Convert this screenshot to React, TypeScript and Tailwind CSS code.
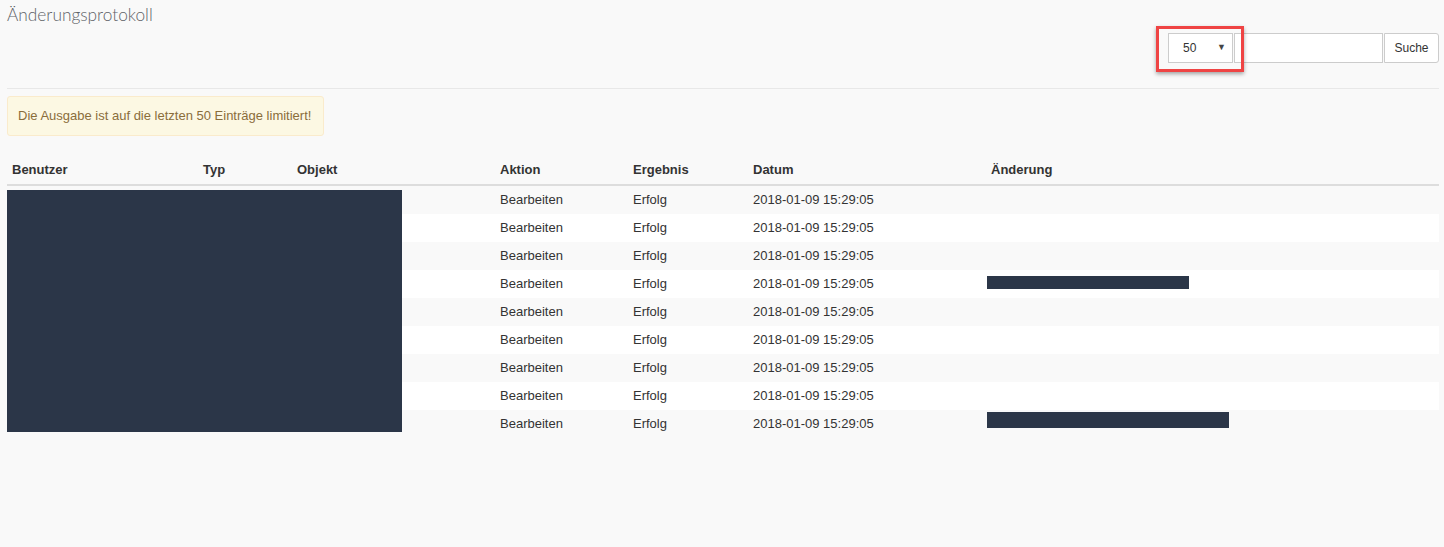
import React from "react";

const rows = Array.from({ length: 9 });

export default function App() {
  return (
    <div className="min-h-[547px] w-full bg-[#f9f9f9] pl-[7px] pr-[5px] text-[#333] font-['Liberation_Sans',Arial,sans-serif]">
      <h1 className="pt-[3px] text-[17.3px] leading-[24px] font-light text-[#5f6368] font-['Lato',sans-serif]">
        Änderungsprotokoll
      </h1>

      <div className="mt-[6px] flex justify-end">
        <div className="relative flex h-[30px] items-stretch">
          <div className="flex w-[65px] items-center justify-between border border-[#ccc] bg-white pl-[14px] pr-[6px] text-[12px]">
            <span>50</span>
            <span className="text-[9px] text-[#444]">▼</span>
          </div>
          <input
            className="ml-[1px] w-[149px] border border-[#ccc] bg-white px-2 text-[12px] outline-none"
            defaultValue=""
          />
          <button className="ml-[1px] w-[55px] rounded-r-[3px] border border-[#ccc] bg-white text-[12px] text-[#333]">
            Suche
          </button>
          <div className="pointer-events-none absolute left-[-12px] top-[-7px] h-[46px] w-[88px] border-[3px] border-[#ef4444] shadow-[0_2px_4px_rgba(0,0,0,0.35)]" />
        </div>
      </div>

      <div className="mt-[25px] border-t border-[#e8e8e8]" />

      <div className="mt-[7px] inline-block rounded-[3px] border border-[#faebcc] bg-[#fcf8e3] pl-[10px] pr-[12px] py-[10px] text-[13px] leading-[18px] text-[#8a6d3b]">
        Die Ausgabe ist auf die letzten 50 Einträge limitiert!
      </div>

      <div className="relative mt-[18px]">
        <table className="w-full table-fixed border-collapse text-[13px] leading-[18px]">
          <colgroup>
            <col className="w-[191px]" />
            <col className="w-[94px]" />
            <col className="w-[203px]" />
            <col className="w-[133px]" />
            <col className="w-[120px]" />
            <col className="w-[238px]" />
            <col />
          </colgroup>
          <thead>
            <tr className="border-b-2 border-[#ddd] text-left">
              <th className="px-[5px] pt-[7px] pb-[5px] font-bold">Benutzer</th>
              <th className="px-[5px] pt-[7px] pb-[5px] font-bold">Typ</th>
              <th className="px-[5px] pt-[7px] pb-[5px] font-bold">Objekt</th>
              <th className="px-[5px] pt-[7px] pb-[5px] font-bold">Aktion</th>
              <th className="px-[5px] pt-[7px] pb-[5px] font-bold">Ergebnis</th>
              <th className="px-[5px] pt-[7px] pb-[5px] font-bold">Datum</th>
              <th className="px-[5px] pt-[7px] pb-[5px] font-bold">Änderung</th>
            </tr>
          </thead>
          <tbody>
            {rows.map((_, i) => (
              <tr key={i} className={i % 2 === 0 ? "bg-[#f9f9f9]" : "bg-white"}>
                <td className="h-[28px] px-[5px] py-[5px]"></td>
                <td className="px-[5px] py-[5px]"></td>
                <td className="px-[5px] py-[5px]"></td>
                <td className="px-[5px] py-[5px]">Bearbeiten</td>
                <td className="px-[5px] py-[5px]">Erfolg</td>
                <td className="px-[5px] py-[5px]">2018-01-09 15:29:05</td>
                <td className="px-[5px] py-[5px]"></td>
              </tr>
            ))}
          </tbody>
        </table>
        <div className="absolute left-0 top-[36px] h-[242px] w-[395px] bg-[#2b3648]" />
        <div className="absolute left-[980px] top-[122px] h-[13px] w-[202px] bg-[#2b3648]" />
        <div className="absolute left-[980px] top-[258px] h-[16px] w-[242px] bg-[#2b3648]" />
      </div>
    </div>
  );
}
